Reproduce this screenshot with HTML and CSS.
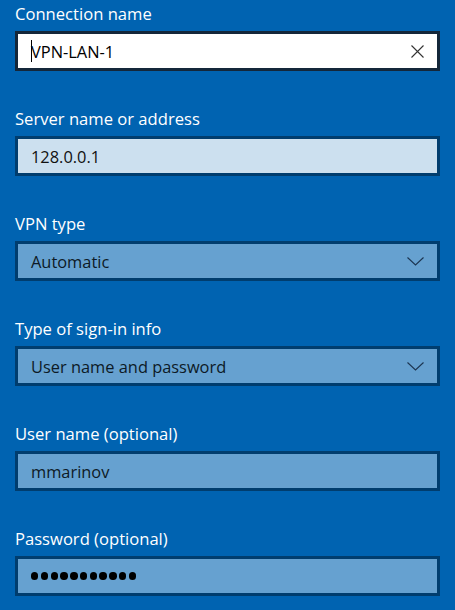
FILE: index.html
```html
<!DOCTYPE html>
<html lang="en">
<head>
<meta charset="utf-8">
<title>Add a VPN connection</title>
<link rel="stylesheet" href="styles.css">
</head>
<body>
<div class="form">
  <div class="field">
    <div class="label">Connection name</div>
    <div class="box box-focus">
      <span class="caret"></span><span class="value">VPN-LAN-1</span>
      <svg class="icon" width="13" height="13" viewBox="0 0 13 13"><path d="M0.5 0.5 L12.5 12.5 M12.5 0.5 L0.5 12.5" stroke="#333" stroke-width="1.1" fill="none"/></svg>
    </div>
  </div>
  <div class="field">
    <div class="label">Server name or address</div>
    <div class="box box-light"><span class="value">128.0.0.1</span></div>
  </div>
  <div class="field">
    <div class="label">VPN type</div>
    <div class="box box-mid">
      <span class="value">Automatic</span>
      <svg class="icon" width="17" height="9" viewBox="0 0 17 9"><path d="M0.5 0.5 L8.5 8 L16.5 0.5" stroke="#1c3550" stroke-width="1.1" fill="none"/></svg>
    </div>
  </div>
  <div class="field">
    <div class="label">Type of sign-in info</div>
    <div class="box box-mid">
      <span class="value">User name and password</span>
      <svg class="icon" width="17" height="9" viewBox="0 0 17 9"><path d="M0.5 0.5 L8.5 8 L16.5 0.5" stroke="#1c3550" stroke-width="1.1" fill="none"/></svg>
    </div>
  </div>
  <div class="field">
    <div class="label">User name (optional)</div>
    <div class="box box-mid"><span class="value">mmarinov</span></div>
  </div>
  <div class="field">
    <div class="label">Password (optional)</div>
    <div class="box box-mid">
      <span class="dots" aria-label="password hidden"><i></i><i></i><i></i><i></i><i></i><i></i><i></i><i></i><i></i><i></i><i></i></span>
    </div>
  </div>
</div>
</body>
</html>
```
FILE: styles.css
```css
html, body {
  margin: 0;
  padding: 0;
  background: #0063b1;
}
body {
  width: 455px;
  height: 610px;
  overflow: hidden;
  font-family: "Open Sans", "Noto Sans", sans-serif;
}
.form {
  padding: 1px 15px 0 15px;
  display: flex;
  flex-direction: column;
  gap: 35px;
}
.field {
  display: flex;
  flex-direction: column;
}
.label {
  color: #ffffff;
  font-size: 16.6px;
  line-height: 26px;
  height: 26px;
  margin-bottom: 4px;
}
.box {
  box-sizing: border-box;
  height: 40px;
  border: 3px solid #003d6e;
  display: flex;
  align-items: center;
  padding: 0 13px 0 13px;
  color: #111;
  font-size: 16.4px;
}
.box-focus {
  background: #ffffff;
  border-color: #14273a;
  color: #000;
}
.box-light {
  background: #cce0ef;
}
.box-mid {
  background: #66a1d0;
  color: #0d1a26;
}
.value {
  flex: 1;
  white-space: nowrap;
}
.caret {
  width: 1px;
  height: 22px;
  background: #000;
  margin-right: -1px;
}
.icon {
  flex: none;
}
.dots {
  display: flex;
  gap: 2.4px;
}
.dots i {
  display: block;
  width: 7.4px;
  height: 7.4px;
  border-radius: 50%;
  background: #000;
}
```
